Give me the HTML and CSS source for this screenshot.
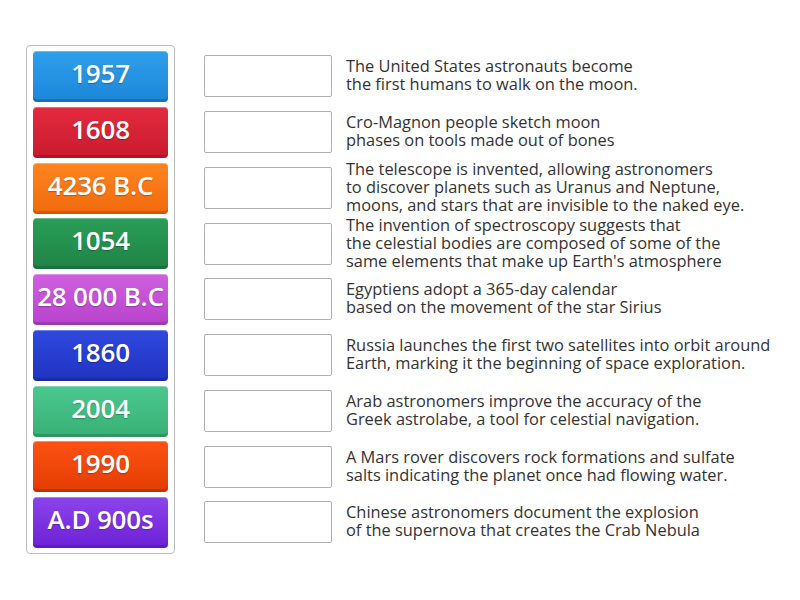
FILE: index.html
```html
<!DOCTYPE html>
<html>
<head>
<meta charset="utf-8">
<link rel="stylesheet" href="styles.css">
</head>
<body>
<div class="game">
  <div class="bank">
    <div class="tile c1">1957</div>
    <div class="tile c2">1608</div>
    <div class="tile c3">4236 B.C</div>
    <div class="tile c4">1054</div>
    <div class="tile c5">28 000 B.C</div>
    <div class="tile c6">1860</div>
    <div class="tile c7">2004</div>
    <div class="tile c8">1990</div>
    <div class="tile c9">A.D 900s</div>
  </div>
  <div class="rows">
    <div class="row"><div class="slot"></div><div class="desc">The United States astronauts become<br>the first humans to walk on the moon.</div></div>
    <div class="row"><div class="slot"></div><div class="desc">Cro-Magnon people sketch moon<br>phases on tools made out of bones</div></div>
    <div class="row"><div class="slot"></div><div class="desc">The telescope is invented, allowing astronomers<br>to discover planets such as Uranus and Neptune,<br>moons, and stars that are invisible to the naked eye.</div></div>
    <div class="row"><div class="slot"></div><div class="desc">The invention of spectroscopy suggests that<br>the celestial bodies are composed of some of the<br>same elements that make up Earth's atmosphere</div></div>
    <div class="row"><div class="slot"></div><div class="desc">Egyptiens adopt a 365-day calendar<br>based on the movement of the star Sirius</div></div>
    <div class="row"><div class="slot"></div><div class="desc">Russia launches the first two satellites into orbit around<br>Earth, marking it the beginning of space exploration.</div></div>
    <div class="row"><div class="slot"></div><div class="desc">Arab astronomers improve the accuracy of the<br>Greek astrolabe, a tool for celestial navigation.</div></div>
    <div class="row"><div class="slot"></div><div class="desc">A Mars rover discovers rock formations and sulfate<br>salts indicating the planet once had flowing water.</div></div>
    <div class="row"><div class="slot"></div><div class="desc">Chinese astronomers document the explosion<br>of the supernova that creates the Crab Nebula</div></div>
  </div>
</div>
</body>
</html>
```
FILE: styles.css
```css
html, body {
  margin: 0;
  padding: 0;
  background: #fff;
}
body {
  font-family: "Open Sans", "DejaVu Sans", sans-serif;
}
.game {
  display: flex;
  align-items: flex-start;
  margin: 45px 0 0 26px;
}
.bank {
  display: flex;
  flex-direction: column;
  gap: 4.75px;
  padding: 5px 6px;
  border: 1px solid #bdbdbd;
  border-radius: 4px;
}
.tile {
  width: 135px;
  height: 51px;
  box-sizing: border-box;
  border-radius: 4px;
  color: #fff;
  font-size: 26px;
  font-weight: 600;
  letter-spacing: -0.2px;
  display: flex;
  align-items: center;
  justify-content: center;
  white-space: nowrap;
  text-shadow: 0 1px 1px rgba(0,0,0,0.25);
  box-shadow: inset 0 1px 0 rgba(255,255,255,0.3), inset 0 -3px 0 rgba(0,0,0,0.15);
  padding-bottom: 7px;
}
.c1 { background: linear-gradient(#2fa0ec, #1c85d8); }
.c2 { background: linear-gradient(#e42a3e, #c81a2e); }
.c3 { background: linear-gradient(#ff8420, #f06a0c); }
.c4 { background: linear-gradient(#2a9e58, #1f8346); }
.c5 { background: linear-gradient(#d060e0, #b842cc); }
.c6 { background: linear-gradient(#3048e0, #2033c0); }
.c7 { background: linear-gradient(#4bc890, #38b075); }
.c8 { background: linear-gradient(#ff5214, #e23c02); }
.c9 { background: linear-gradient(#8c44ec, #6c20d6); }
.rows {
  display: flex;
  flex-direction: column;
  margin-left: 29px;
  padding-top: 3.6px;
}
.row {
  height: 55.75px;
  display: flex;
  align-items: center;
  gap: 14px;
}
.slot {
  width: 128px;
  height: 42px;
  box-sizing: border-box;
  border: 1px solid #b0b0b0;
  border-radius: 2px;
  background: #fff;
  flex: none;
}
.desc {
  font-size: 16.4px;
  line-height: 18px;
  color: #333;
  white-space: nowrap;
  margin-bottom: 2px;
}
```
